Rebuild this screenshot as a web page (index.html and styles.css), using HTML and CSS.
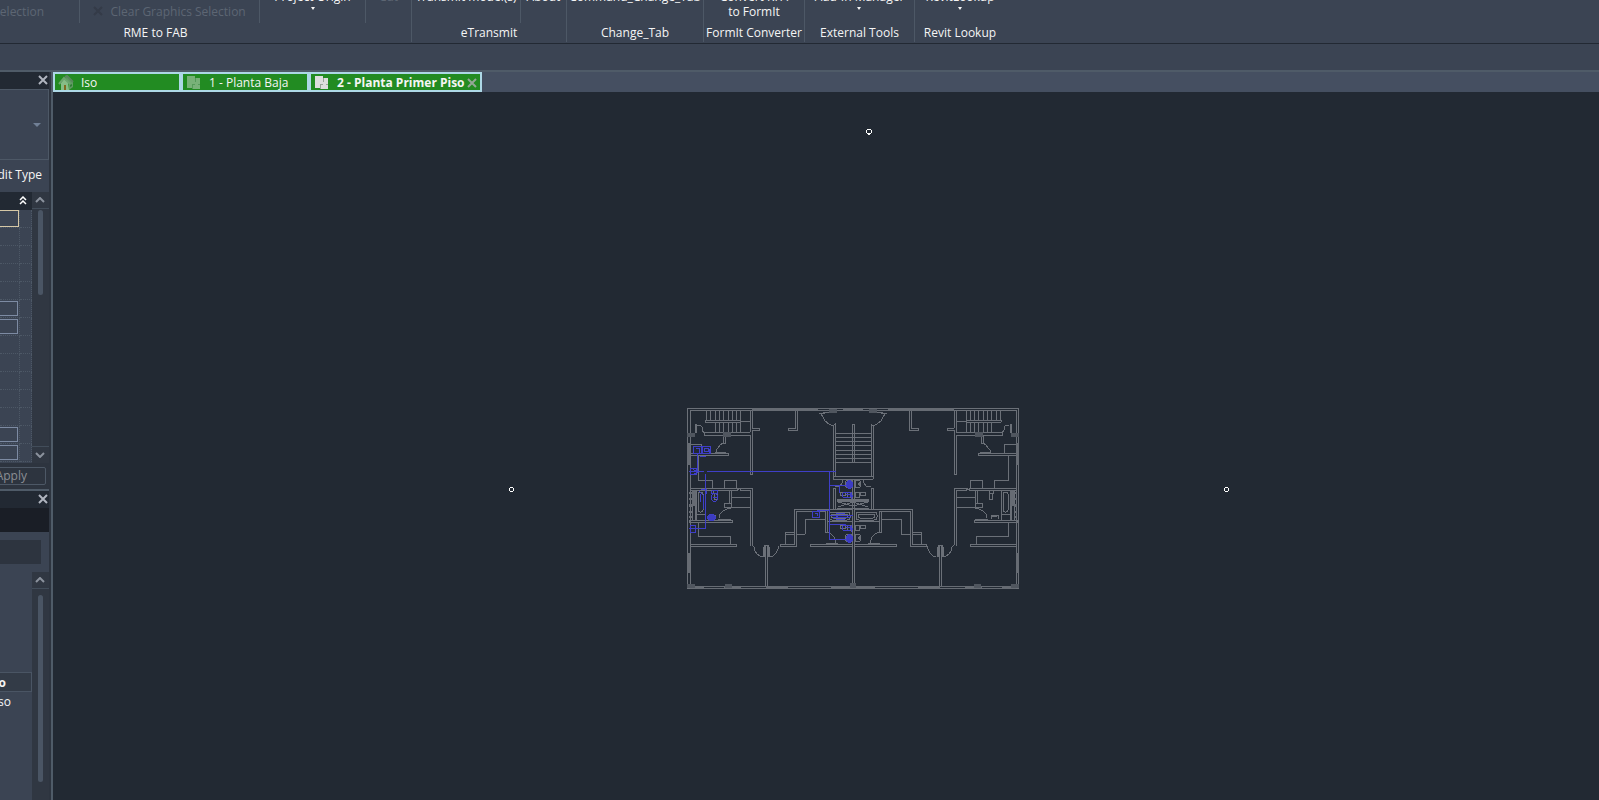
FILE: index.html
```html
<!DOCTYPE html>
<html lang="en">
  <head>
    <meta charset="UTF-8" />
    <meta name="viewport" content="width=device-width, initial-scale=1.0" />
    <title>2 - Planta Primer Piso</title>
    <link rel="stylesheet" href="styles.css">
  </head>
  <body>
    <header class="ribbon">
      <section class="group rme">
        <div class="tools">
          <div class="tool selection"><button disabled>Selection</button></div>
          <div class="tool clear">
            <button disabled>
              <svg width="10" height="10" viewBox="0 0 10 10"><path d="M1 1l8 8M9 1l-8 8" stroke="#343b48" stroke-width="2" /></svg>
              Clear Graphics Selection
            </button>
          </div>
          <div class="tool origin"><button class="drop">Project Origin<span class="arrow"></span></button></div>
          <div class="tool cut"><button class="drop" disabled>Cut<span class="arrow none"></span></button></div>
        </div>
        <h2>RME to FAB</h2>
      </section>
      <section class="group etransmit">
        <div class="tools">
          <div class="tool transmit"><button class="drop">Transmit model(s)<span class="arrow none"></span></button></div>
          <div class="tool about"><button class="drop">About<span class="arrow none"></span></button></div>
        </div>
        <h2>eTransmit</h2>
      </section>
      <section class="group change">
        <div class="tools">
          <div class="tool"><button class="drop">Command_Change_Tab<span class="arrow none"></span></button></div>
        </div>
        <h2>Change_Tab</h2>
      </section>
      <section class="group formit">
        <div class="tools">
          <div class="tool"><button class="drop">Convert RFA<br />to FormIt</button></div>
        </div>
        <h2>FormIt Converter</h2>
      </section>
      <section class="group external">
        <div class="tools">
          <div class="tool"><button class="drop">Add-In Manager<span class="arrow"></span></button></div>
        </div>
        <h2>External Tools</h2>
      </section>
      <section class="group lookup">
        <div class="tools">
          <div class="tool"><button class="drop">RevitLookup<span class="arrow"></span></button></div>
        </div>
        <h2>Revit Lookup</h2>
      </section>
    </header>
    <div class="options"></div>

    <div class="work">
      <aside class="side">
        <section class="properties">
          <div class="title">
            <button class="close" aria-label="Close properties">
              <svg width="10" height="10" viewBox="0 0 10 10"><path d="M1 1l8 8M9 1l-8 8" /></svg>
            </button>
          </div>
          <button class="type" aria-label="Type selector"><span class="arrow big"></span></button>
          <div class="edit"><button>Edit Type</button></div>
          <div class="grid">
            <div class="rows">
              <div class="head">
                <svg width="8" height="10" viewBox="0 0 8 10"><path d="M1 4l3-3 3 3M1 8l3-3 3 3" fill="none" stroke="#fff" stroke-width="1.5" /></svg>
              </div>
              <table>
                <tr><td><input class="active" aria-label="Value" /></td><td></td></tr>
                <tr><td></td><td></td></tr>
                <tr><td></td><td></td></tr>
                <tr><td></td><td></td></tr>
                <tr><td></td><td></td></tr>
                <tr><td><input aria-label="Value" /></td><td></td></tr>
                <tr><td><input aria-label="Value" /></td><td></td></tr>
                <tr><td></td><td></td></tr>
                <tr><td></td><td></td></tr>
                <tr><td></td><td></td></tr>
                <tr><td></td><td></td></tr>
                <tr><td></td><td></td></tr>
                <tr><td><input aria-label="Value" /></td><td></td></tr>
                <tr><td><input aria-label="Value" /></td><td></td></tr>
              </table>
            </div>
            <div class="scroll">
              <button class="up" aria-label="Up"><svg width="10" height="6" viewBox="0 0 10 6"><path d="M1 5l4-4 4 4" /></svg></button>
              <div class="thumb short"></div>
              <button class="down" aria-label="Down"><svg width="10" height="6" viewBox="0 0 10 6"><path d="M1 1l4 4 4-4" /></svg></button>
            </div>
          </div>
          <div class="apply"><button disabled>Apply</button></div>
        </section>
        <section class="browser">
          <div class="title">
            <button class="close" aria-label="Close browser">
              <svg width="10" height="10" viewBox="0 0 10 10"><path d="M1 1l8 8M9 1l-8 8" /></svg>
            </button>
          </div>
          <div class="black"></div>
          <input class="search" aria-label="Search" />
          <div class="tree">
            <ul>
              <li class="selected">2 - Planta Primer Piso</li>
              <li>Iso</li>
            </ul>
            <div class="scroll">
              <button class="up" aria-label="Up"><svg width="10" height="6" viewBox="0 0 10 6"><path d="M1 5l4-4 4 4" /></svg></button>
              <div class="thumb long"></div>
            </div>
          </div>
        </section>
      </aside>

      <main class="view">
        <nav class="tabs">
          <button class="tab">
            <svg width="16" height="16" viewBox="0 0 16 16">
              <path d="M3 8l3-4 4 3 1 8H3z" fill="#86bd86" />
              <path d="M7 2l3-1 5 6v5l-4 3V8z" fill="#5f9a62" />
              <path d="M1 9l5-6 6 6" fill="none" stroke="#6ca66e" stroke-width="2" />
              <path d="M7 2l2-1 6 6" fill="none" stroke="#58885c" stroke-width="2" />
              <path d="M6 10h2v5H6z" fill="#806a20" />
              <path d="M12 10l2-1v2l-2 1z" fill="#2f7d37" />
            </svg>
            Iso
          </button>
          <button class="tab">
            <svg width="16" height="16" viewBox="0 0 16 16">
              <path d="M1 1h8v2h5v11H6v-1H1z" fill="#78b178" />
              <path d="M6.500 9v5M7 9.500h2M9.500 3v4M12 9.500h2" stroke="#559a5a" />
            </svg>
            1 - Planta Baja
          </button>
          <button class="tab current">
            <svg width="16" height="16" viewBox="0 0 16 16">
              <path d="M1 1h8v2h5v11H6v-1H1z" fill="#dedede" />
              <path d="M6.500 9v5M7 9.500h2M9.500 3v4M12 9.500h2" stroke="#9aa59a" />
            </svg>
            2 - Planta Primer Piso
            <svg class="x" width="10" height="10" viewBox="0 0 10 10"><path d="M1 1l8 8M9 1l-8 8" stroke="#93a796" stroke-width="2" /></svg>
          </button>
        </nav>

        <svg class="canvas" viewBox="53 92 1546 708" preserveAspectRatio="xMinYMin slice">
          <defs>
            <g id="half">
              <!-- stairs in the corner -->
              <path d="M26 10V20M30 10V20M35 10V20M39 10V20M43 10V20M48 10V20M52 10V20M56 10V20M60 10V32M25 20H60M25 22H60M25 20V22M60 21H70M35 22V32M39 22V32M43 22V32M48 22V32M52 22V32M56 22V32" />
              <path d="M70 32H24V35H70M70 10V32M72 10V28M70 35V74H72V30M72 28H79V30H72M115 10V28H108V30H117V10" />
              <!-- kitchen and entry -->
              <path d="M15 33V24H16V33M17 25H20L22 27V30L24 33M43 35V43H45V35M43 43L40 45L38 48L36 50V52M35 52H46M35 53H48V55H8V53H35M10 44H21L22 46V53M18 55V80H32V88M44 88V80H56V88M10 88H57V90H10M60 88H72M60 88V90H70M57 90L60 88" />
              <!-- bathroom -->
              <path d="M49 90V103M51 90V103M44 103H51V107H44ZM51 97H70M51 107H70M70 90V146M72 88V145L74 147M9 120H52V122H9ZM38 119H51M39 118L40 114L43 111L47 109L51 108M12 90V120M15 90V120M16 114H25M16 91V120M25 91V120M33 90H37V93H33ZM34 93V99H37V93M28 119V115H35V119M29 116H34" />
              <rect x="18" y="92" width="5" height="20" rx="2" />
              <path d="M18 122V136H50V144M10 144H56V146H10" />
              <!-- bedroom doors -->
              <path d="M74 147L75 151L77 154L80 156L83 157M90 157L93 156L96 153L98 149L99 146M85 186V145H87V186" />
              <path d="M83 147V157M84 145V157M88 145V157M89 147V157" />
              <path d="M100 144H114V109H172M100 144V146H116V111H146M125 134V119H145M116 134H125M105 144V132H114M105 134H114M145 111V132H147V111M147 132L151 134L154 137L156 143M146 143H158M172 144H130V146H172M147 121H172" />
              <!-- stair core -->
              <path d="M139 14L147 12H155M139 13H145M141 14L143 17L145 21L149 24L153 26M153 77V26L155 24V77M155 33H173M155 37H173M155 41H173M155 45H173M155 50H173M155 54H173M155 58H173M155 62H173M172 24V62M173 24H172M153 76H173M153 79H173M153 77V79M172 79V186M155 87L160 86L162 83L163 79M153 88V109M155 88V109M153 88H155M157 99H173M157 100H173M157 101H173M157 108H173M158 102L173 106M158 107L173 102" />
              <!-- fixtures -->
              <rect x="149" y="112" width="21" height="8" rx="3" />
              <rect x="151" y="114" width="17" height="4" rx="2" />
              <ellipse cx="163" cy="94" rx="3" ry="2" /><rect x="167" y="92" width="4" height="5" />
              <ellipse cx="163" cy="127" rx="3" ry="2" /><rect x="167" y="125" width="4" height="5" />
              <ellipse cx="168" cy="84" rx="3" ry="4" /><ellipse cx="168" cy="138" rx="3" ry="4" />
              <path d="M171 80V88M171 134V142M165 82L168 84L165 86M165 136L168 138L165 140" />
              <g class="solid">
                <rect x="72" y="8" width="101" height="3" />
                <rect x="7" y="43" width="3" height="22" />
                <rect x="7" y="153" width="3" height="20" />
                <rect x="10" y="186" width="163" height="3" />
                <rect x="12" y="90" width="4" height="16" />
                <rect x="9" y="92" width="3" height="2" />
                <rect x="9" y="98" width="3" height="2" />
                <rect x="9" y="104" width="3" height="3" />
                <rect x="9" y="111" width="3" height="2" />
                <rect x="9" y="116" width="3" height="2" />
              </g>
              <g class="dark">
                <rect x="138" y="9" width="25" height="1" />
                <rect x="24" y="187" width="20" height="1" />
                <rect x="61" y="187" width="25" height="1" />
                <rect x="108" y="187" width="43" height="1" />
              </g>
              <g class="post">
                <rect x="7" y="33" width="8" height="4" /><rect x="43" y="32" width="8" height="5" />
                <rect x="149" y="9" width="8" height="4" />
                <rect x="7" y="184" width="8" height="4" /><rect x="45" y="184" width="7" height="4" />
              </g>
            </g>
          </defs>

          <g class="plan" transform="translate(680 400)">
            <g class="line">
              <path d="M7 8H338V188H7ZM10 10H336V186H10Z" />
              <use href="#half" />
              <use href="#half" transform="translate(346 0) scale(-1 1)" />
              <rect class="node" x="170" y="183" width="6" height="5" />
            </g>
            <g class="pipe">
              <path d="M8 71H23M26 71H155M149 71V139H165M149 85H165M159 85V92M136 110H149M149 124H165M17 53V71M25 73V128H8" />
              <path d="M149 115H172M152 117H170M155 113H164M155 119H164M153 118L158 115" />
              <rect x="132" y="111" width="7" height="6" rx="1" /><path d="M134 113H137V115" />
              <rect x="10" y="68" width="6" height="6" /><path d="M13 69L17 72L13 74" />
              <rect x="10" y="125" width="5" height="7" />
              <rect x="13" y="46" width="8" height="7" /><rect x="22" y="46" width="8" height="7" />
              <path d="M15 48H19V53M24 48H28V51H24ZM19 56H25M29 48V53" />
              <path d="M20 89H26M19 91L23 95M20 93V101M23 94V108M26 90V93M31 90H37M31 90V93H37V90" />
              <ellipse cx="34" cy="97" rx="3" ry="4" /><path d="M32 97H36" />
              <rect x="162" y="92" width="8" height="5" rx="2" /><rect x="162" y="125" width="8" height="5" rx="2" />
              <path d="M165 94H171M165 127H171M171 91V98M171 124V131M169 92L173 97M169 125L173 130" />
              <g class="fill">
                <ellipse cx="169" cy="84" rx="3" ry="4" /><ellipse cx="169" cy="138" rx="3" ry="4" />
                <ellipse cx="31" cy="117" rx="4" ry="3" />
              </g>
            </g>
          </g>

          <!-- elevation marks -->
          <g class="mark">
            <path d="M867 129h4v1h1v3h-1v1h-1v1h-2v-1h-1v-1h-1v-3h1zM867 130v3h4v-3z" />
            <path d="M510 487h3v1h1v3h-1v1h-3v-1h-1v-3h1zM510 488v3h3v-3z" />
            <path d="M1225 487h3v1h1v3h-1v1h-3v-1h-1v-3h1zM1225 488v3h3v-3z" />
          </g>
        </svg>
      </main>
    </div>
  </body>
</html>
```
FILE: styles.css
```css
* {
  margin: 0;
  padding: 0;
  box-sizing: border-box;
}

body {
  min-height: 100vh;
  display: flex;
  flex-direction: column;
  overflow: hidden;
  background-color: #3b4453;
  color: #f5f5f5;
  font-family: "Open Sans", "Noto Sans", sans-serif;
  font-size: 12px;
}

button {
  background: none;
  border: none;
  color: inherit;
  font: inherit;
  white-space: nowrap;
}

input {
  background: none;
  color: inherit;
}

/* ribbon */
.ribbon {
  display: flex;
  height: 44px;
  border-bottom: 1px solid #222933;
  overflow: hidden;
}

.group {
  flex-shrink: 0;
  height: 42px;
  border-right: 1px solid #4d5866;
}

.group h2 {
  font-size: 12px;
  font-weight: normal;
  line-height: 20px;
  text-align: center;
  white-space: nowrap;
}

.rme {
  width: 512px;
  margin-left: -100px;
}

.etransmit {
  width: 155px;
}

.change {
  width: 137px;
}

.formit {
  width: 101px;
}

.external {
  width: 110px;
}

.lookup {
  width: 90px;
  border: none;
}

.tools {
  display: flex;
  height: 23px;
}

.tool {
  display: flex;
  flex: 1;
  align-items: flex-end;
  justify-content: center;
  min-width: 0;
  border-right: 1px solid #4d5866;
}

.tool:last-child {
  border: none;
}

.tool button {
  line-height: 15px;
  padding-bottom: 4px;
}

.tool button:disabled {
  color: #5d6673;
}

.selection {
  flex: 0 0 180px;
  justify-content: flex-end;
  padding-right: 35px;
}

.clear {
  flex: 0 0 180px;
}

.clear svg {
  margin-right: 4px;
}

.origin {
  flex: 0 0 106px;
}

.transmit {
  flex: 0 0 109px;
}

.drop {
  display: flex;
  flex-direction: column;
  align-items: center;
}

.formit .drop {
  display: block;
}

.arrow {
  width: 0;
  height: 0;
  margin: 3px 0 9px;
  border: 2px solid transparent;
  border-top: 3px solid #f5f5f5;
  border-bottom: none;
}

.none {
  visibility: hidden;
}

.big {
  margin: 0;
  border-width: 4px;
  border-top: 4px solid #718096;
}

.options {
  height: 28px;
  border-bottom: 2px solid #4f5b68;
}

/* panels at the left */
.work {
  display: flex;
  flex: 1;
}

.side {
  display: flex;
  flex-direction: column;
  flex: 0 0 53px;
  border-right: 2px solid #4f5b68;
  padding-right: 2px;
  background-color: #2d343f;
  overflow: hidden;
}

.title {
  display: flex;
  justify-content: flex-end;
  height: 17px;
  padding: 3px 1px;
  background-color: #222933;
}

.close {
  display: flex;
}

.close path {
  stroke: #b0b5bf;
  stroke-width: 2;
}

.type {
  display: flex;
  align-items: center;
  justify-content: flex-end;
  width: 100%;
  height: 71px;
  padding-right: 7px;
  background-color: #3b4453;
  border: 1px solid #4d5866;
  border-left: none;
}

.edit {
  display: flex;
  justify-content: flex-end;
  height: 32px;
  padding: 0 7px 4px 0;
  background-color: #3b4453;
}

.grid {
  display: flex;
  background-color: #3b4453;
}

.rows {
  flex: 1;
  padding-bottom: 1px;
}

.head {
  display: flex;
  align-items: center;
  justify-content: flex-end;
  height: 18px;
  padding-right: 5px;
  background-color: #222933;
}

table {
  width: 100%;
  border-spacing: 0;
  table-layout: fixed;
}

td {
  height: 18px;
  border-right: 1px dotted #4d5866;
  border-bottom: 1px dotted #4d5866;
}

td:first-child {
  width: 20px;
}

td input {
  display: block;
  width: 18px;
  height: 15px;
  border: 1px solid #7d8ba3;
  border-left: none;
}

td .active {
  width: 19px;
  height: 17px;
  border-color: #d6c8a6;
}

.scroll {
  display: flex;
  flex-direction: column;
  flex: 0 0 17px;
  background-color: #303742;
}

.scroll button {
  display: flex;
  align-items: center;
  justify-content: center;
  height: 17px;
  padding-right: 1px;
}

.scroll path {
  fill: none;
  stroke: #8b929d;
  stroke-width: 2;
}

.up {
  border-bottom: 1px solid #424d5a;
}

.down {
  margin-top: auto;
  border-top: 1px solid #424d5a;
}

.thumb {
  width: 5px;
  margin-left: 6px;
  border-radius: 3px;
  background-color: #4a5564;
}

.short {
  height: 85px;
  margin-top: 1px;
}

.long {
  height: 187px;
  margin-top: 6px;
}

.apply {
  display: flex;
  justify-content: flex-end;
  height: 26px;
  padding: 4px 3px;
}

.apply button {
  flex-shrink: 0;
  width: 70px;
  padding-right: 18px;
  border: 1px solid #4d5866;
  border-radius: 2px;
  color: #8b8e94;
  line-height: 16px;
  text-align: right;
}

.browser {
  display: flex;
  flex-direction: column;
  flex: 1;
  border-top: 2px solid #4f5b68;
  background-color: #3b4453;
}

.black {
  height: 24px;
  background-color: #1a1e26;
}

.search {
  width: 41px;
  height: 24px;
  margin: 8px 0;
  border: none;
  background-color: #2d343f;
}

.tree {
  display: flex;
  flex: 1;
}

.tree ul {
  flex: 1;
  min-width: 0;
  padding-top: 100px;
  list-style: none;
}

.tree li {
  display: flex;
  justify-content: flex-end;
  height: 20px;
  padding-right: 21px;
  line-height: 20px;
  white-space: nowrap;
}

.tree .selected {
  padding-right: 25px;
  border: 1px solid #4a5564;
  border-left: none;
  background-color: #333b47;
  font-weight: bold;
}

/* open views */
.view {
  display: flex;
  flex: 1;
  flex-direction: column;
  background-color: #222933;
}

.tabs {
  display: flex;
  height: 20px;
  background-color: #454f61;
}

.tab {
  display: flex;
  align-items: center;
  width: 128px;
  padding: 2px 0 0 3px;
  border: 2px solid #add8e6;
  background-color: #228b22;
  line-height: 16px;
}

.tab svg {
  flex-shrink: 0;
  margin-right: 7px;
}

.current {
  width: 173px;
  font-weight: bold;
}

.tab .x {
  margin: 0 3px 0 auto;
}

.canvas {
  display: block;
  flex: 1;
  width: 100%;
  min-height: 0;
  shape-rendering: crispEdges;
}

.plan path,
.plan rect,
.plan ellipse {
  transform: translate(0.5px, 0.5px);
}

.line {
  fill: none;
  stroke: #6b7078;
}

.solid rect {
  fill: #666b73;
  stroke: none;
  transform: none;
}

.dark rect {
  fill: #222933;
  stroke: none;
  transform: none;
}

.post rect,
.line .node {
  fill: #50565f;
  stroke: none;
  transform: none;
}

.pipe {
  fill: none;
  stroke: #3f3fc8;
}

.fill {
  fill: #3c3cc0;
}

.mark {
  fill: #fff;
  fill-rule: evenodd;
}
```
